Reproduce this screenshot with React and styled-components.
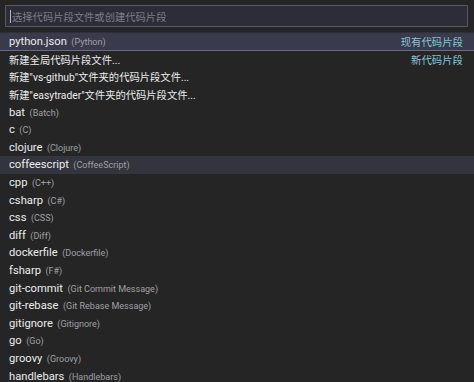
import React from 'react';
import styled, { createGlobalStyle } from 'styled-components';

const GlobalStyle = createGlobalStyle`
    html, body {
        margin: 0;
        padding: 0;
        background: #252526;
    }
    body {
        font-family: Roboto, "Noto Sans CJK SC", sans-serif;
    }
`;

const Picker = styled.div`
    width: 474px;
    height: 382px;
    overflow: hidden;
    background: #252526;
    display: flex;
    flex-direction: column;
`;

const InputWrap = styled.div`
    padding: 5px 6px 5px 5px;
    border-bottom: 1px solid #2f2f38;
`;

const Input = styled.div`
    height: 20px;
    display: flex;
    align-items: center;
    background: #2c2d37;
    border: 1px solid #55566a;
    padding-left: 4px;
    font-size: 10.3px;
    color: #7d7d86;
    font-family: "Noto Sans CJK SC", sans-serif;
`;

const Caret = styled.span`
    width: 1px;
    height: 13px;
    background: #b8b8c0;
    margin-right: 1px;
`;

const List = styled.div`
    display: flex;
    flex-direction: column;
`;

const Row = styled.div`
    height: 17.6px;
    flex: 0 0 17.6px;
    box-sizing: border-box;
    display: flex;
    align-items: center;
    justify-content: space-between;
    padding: 0 11px 0 9px;
    background: ${(props) => props.selected ? '#393a4b' : props.hover ? '#33343d' : 'transparent'};
    border-bottom: ${(props) => props.selected ? '1px solid #6c6a88' : 'none'};
`;

const Label = styled.span`
    font-size: ${(props) => props.cjk ? '10.3px' : '11.2px'};
    color: #ececec;
    white-space: nowrap;
`;

const Desc = styled.span`
    font-size: 9px;
    color: #a0a0a4;
    margin-left: 4.5px;
`;

const Tag = styled.span`
    font-size: 10.4px;
    color: #8ec2d6;
    font-family: "Noto Sans CJK SC", sans-serif;
`;

const items = [
    { label: 'python.json', desc: 'Python', tag: '现有代码片段', selected: true },
    { label: '新建全局代码片段文件...', tag: '新代码片段', cjk: true },
    { label: '新建"vs-github"文件夹的代码片段文件...', cjk: true },
    { label: '新建"easytrader"文件夹的代码片段文件...', cjk: true },
    { label: 'bat', desc: 'Batch' },
    { label: 'c', desc: 'C' },
    { label: 'clojure', desc: 'Clojure' },
    { label: 'coffeescript', desc: 'CoffeeScript', hover: true },
    { label: 'cpp', desc: 'C++' },
    { label: 'csharp', desc: 'C#' },
    { label: 'css', desc: 'CSS' },
    { label: 'diff', desc: 'Diff' },
    { label: 'dockerfile', desc: 'Dockerfile' },
    { label: 'fsharp', desc: 'F#' },
    { label: 'git-commit', desc: 'Git Commit Message' },
    { label: 'git-rebase', desc: 'Git Rebase Message' },
    { label: 'gitignore', desc: 'Gitignore' },
    { label: 'go', desc: 'Go' },
    { label: 'groovy', desc: 'Groovy' },
    { label: 'handlebars', desc: 'Handlebars' },
];

const App = () => {
    return (
        <Picker>
            <GlobalStyle />
            <InputWrap>
                <Input>
                    <Caret />
                    选择代码片段文件或创建代码片段
                </Input>
            </InputWrap>
            <List>
                {items.map((item) => (
                    <Row key={item.label} selected={item.selected} hover={item.hover}>
                        <Label cjk={item.cjk}>
                            {item.label}
                            {item.desc && <Desc>({item.desc})</Desc>}
                        </Label>
                        {item.tag && <Tag>{item.tag}</Tag>}
                    </Row>
                ))}
            </List>
        </Picker>
    );
};

export default App;
